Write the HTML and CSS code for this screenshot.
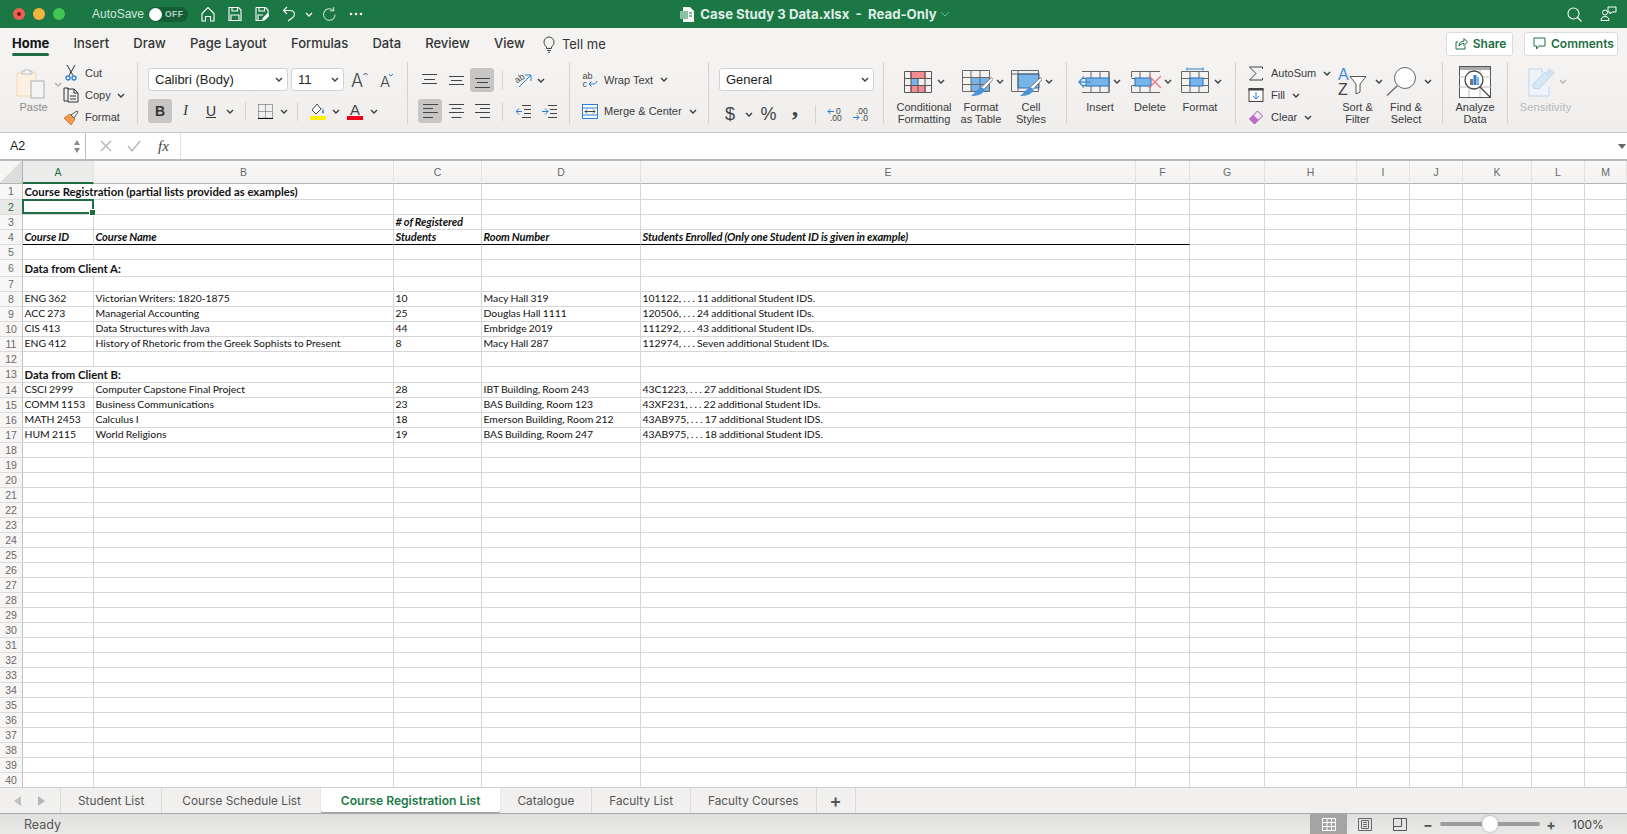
FILE: index.html
```html
<!DOCTYPE html>
<html lang="en">
<head>
<meta charset="utf-8">
<title>Case Study 3 Data.xlsx - Read-Only</title>
<link rel="stylesheet" href="styles.css">
</head>
<body>
<svg class="sprite" aria-hidden="true">
  <symbol id="chev" viewBox="0 0 8 5"><polyline points="1,1 4,4 7,1" fill="none" stroke="#3c3c3c" stroke-width="1.4"/></symbol>
  <symbol id="brush" viewBox="0 0 22 19"><path d="M20.500.5 9.500 11l2.500 2.500L22 2.500z" fill="#fff" stroke="#6f6f6f" stroke-width=".9"/><path d="M9 11c2-1 4 0 4.500 2.500C11 18 5 19 0 19c3-2 5-6 9-8z" fill="#4a93d6"/></symbol>
</svg>

<header class="titlebar">
  <div class="tb-left">
    <span class="light red"><i></i></span><span class="light yellow"></span><span class="light green"></span>
    <span class="autosave">AutoSave</span>
    <span class="toggle"><i></i><b>OFF</b></span>
    <div class="qat">
      <svg width="14" height="16" viewBox="0 0 14 16"><path d="M1 7.500 7 1.500l6 6V15H9.500v-4.500h-5V15H1z" fill="none" stroke="#fff" stroke-width="1.100"/></svg>
      <svg width="14" height="16" viewBox="0 0 14 16"><path d="M1 1.500h9.500L13 4v10.500H1zM4 1.500V5h5.500V1.500M3 14.500V9h8v5.500" fill="none" stroke="#fff" stroke-width="1.100"/></svg>
      <svg width="14" height="16" viewBox="0 0 14 16"><path d="M1 1.500h9.500L13 4v4M7 14.500H1v-13M4 1.500V5h5.500V1.500M3 14.500V9h5" fill="none" stroke="#fff" stroke-width="1.100"/><path d="M7 15l.6-3 5-5 2.300 2.300-5 5z" fill="#fff"/></svg>
      <svg width="14" height="16" viewBox="0 0 14 16"><path d="M5 1 1.500 4.500 5 8M1.500 4.500H8c5 0 6 5 1.500 8L6 15" fill="none" stroke="#fff" stroke-width="1.100"/></svg>
      <svg class="qat-chev" width="8" height="5"><polyline points="1,1 4,4 7,1" fill="none" stroke="#fff" stroke-width="1.300"/></svg>
      <svg width="14" height="16" viewBox="0 0 15 16"><path d="M12 4A6.200 6.200 0 1 0 14 8.500" fill="none" stroke="#cfe3d7" stroke-width="1.100"/><path d="M12.500.5v4h-4" fill="none" stroke="#cfe3d7" stroke-width="1.100"/></svg>
      <svg width="14" height="4" viewBox="0 0 14 4"><circle cx="2" cy="2" r="1.300" fill="#fff"/><circle cx="7" cy="2" r="1.300" fill="#fff"/><circle cx="12" cy="2" r="1.300" fill="#fff"/></svg>
    </div>
  </div>
  <div class="doc-title">
    <svg width="14" height="15" viewBox="0 0 14 15"><path d="M3 0h7l4 4v11H3z" fill="#f1f6f3"/><rect x="0" y="4" width="8" height="8" fill="#8fbfa3"/><path d="M9 6h3M9 9h3" stroke="#1c7846"/></svg>
    <span>Case Study 3 Data.xlsx&nbsp; - &nbsp;Read-Only</span>
    <svg width="10" height="6" viewBox="0 0 10 6"><polyline points="1,1 5,5 9,1" fill="none" stroke="#7fb197"/></svg>
  </div>
  <div class="tb-right">
    <svg width="15" height="15" viewBox="0 0 15 15"><circle cx="6.500" cy="6.500" r="5.500" fill="none" stroke="#fff" stroke-width="1.100"/><path d="M10.500 10.500 14.500 14.500" stroke="#fff" stroke-width="1.100"/></svg>
    <svg width="17" height="16" viewBox="0 0 17 16"><circle cx="5" cy="6.500" r="2.500" fill="none" stroke="#fff"/><path d="M1 14.500c0-2 1-4 4-4s4 2 4 4z" fill="none" stroke="#fff"/><path d="M8 1h8v5h-4l-2 2V6H8z" fill="none" stroke="#fff"/></svg>
  </div>
</header>

<nav class="tabrow">
  <span class="rtab active">Home</span>
  <span class="rtab">Insert</span>
  <span class="rtab">Draw</span>
  <span class="rtab">Page Layout</span>
  <span class="rtab">Formulas</span>
  <span class="rtab">Data</span>
  <span class="rtab">Review</span>
  <span class="rtab">View</span>
  <span class="tell">
    <svg width="12" height="17" viewBox="0 0 12 17"><path d="M3.500 11C2 9.500 1 8.300 1 6a5 5 0 0 1 10 0c0 2.300-1 3.500-2.500 5v1.500h-5zM4 14.500h4M5 16.300h2" fill="none" stroke="#444"/></svg>
    Tell me
  </span>
  <span class="action share">
    <svg width="13" height="13" viewBox="0 0 13 13"><path d="M3 5H1v7h9V9M4 9c0-3 2-5 5-5V1.500L12.500 5 9 8.500V6.500C7 6.500 5 7 4 9z" fill="none" stroke="#1d6f42"/></svg>
    Share
  </span>
  <span class="action comments">
    <svg width="13" height="13" viewBox="0 0 13 13"><path d="M1 1h11v8H6l-2.500 3V9H1z" fill="none" stroke="#1d6f42"/></svg>
    Comments
  </span>
</nav>

<section class="ribbon">
  <div class="grp g-clip">
    <div class="paste">
      <div class="paste-top">
        <svg width="29" height="30" viewBox="0 0 29 30"><rect x="1" y="4" width="19" height="23" fill="#fbf0e2" stroke="#f4d8b4"/><path d="M6 5V2h3a2 2 0 0 1 4 0h3v3z" fill="#f4f3f2" stroke="#bdbdbd"/><rect x="15" y="12" width="13" height="17" fill="#f4f4f4" stroke="#adadad"/></svg>
        <svg class="chev pale" width="8" height="5"><use href="#chev"/></svg>
      </div>
      <span class="muted">Paste</span>
    </div>
    <div class="stack">
      <div class="line"><svg width="12" height="16" viewBox="0 0 12 16"><path d="M2 0 8 10.500M10 0 4 10.500" stroke="#333" fill="none"/><circle cx="3" cy="13" r="2" fill="none" stroke="#2b7cd3" stroke-width="1.300"/><circle cx="9" cy="13" r="2" fill="none" stroke="#2b7cd3" stroke-width="1.300"/></svg><span>Cut</span></div>
      <div class="line"><svg width="16" height="16" viewBox="0 0 16 16"><path d="M5 1H1v13h4" fill="none" stroke="#333"/><path d="M5 1v14h10V6l-4-4H5zM11 2v4h4M7 9h6M7 12h6" fill="none" stroke="#333"/></svg><span>Copy</span><svg class="chev" width="8" height="5"><use href="#chev"/></svg></div>
      <div class="line"><svg width="16" height="15" viewBox="0 0 16 15"><path d="M1 8l6-4 5 5-4 6z" fill="#f19d4f" stroke="#e27a26"/><path d="M8 5l6-4 1 1-4 6z" fill="#fff" stroke="#555"/></svg><span>Format</span></div>
    </div>
  </div>

  <div class="grp g-font">
    <div class="row1 font-r1">
      <div class="select font-name"><span>Calibri (Body)</span><svg class="chev" width="8" height="5"><use href="#chev"/></svg></div>
      <div class="select font-size"><span>11</span><svg class="chev" width="8" height="5"><use href="#chev"/></svg></div>
      <svg class="ovf" width="16" height="15" viewBox="0 0 16 15"><text x="-1" y="14.500" class="glyph-a">A</text><polyline points="11.500,3 13.500,1 15.500,3" fill="none" stroke="#444"/></svg>
      <svg class="ovf" width="14" height="14" viewBox="0 0 14 14"><text x="0" y="14" class="glyph-a small">A</text><polyline points="9,1 11,3 13,1" fill="none" stroke="#2b7cd3"/></svg>
    </div>
    <div class="row2 font-r2">
      <div class="btn on bold">B</div>
      <div class="btn ital">I</div>
      <div class="btn under">U</div>
      <svg class="chev" width="8" height="5"><use href="#chev"/></svg>
      <i class="vr"></i>
      <svg width="15" height="15" viewBox="0 0 15 15"><path d="M.5.5h14M.5.5v14M14.500.5v14M7.500.5v14M.5 7.500h14" stroke="#555" stroke-dasharray="1 1" fill="none"/><path d="M0 14.500h15" stroke="#111" stroke-width="1.200"/></svg>
      <svg class="chev" width="8" height="5"><use href="#chev"/></svg>
      <i class="vr"></i>
      <svg width="16" height="17" viewBox="0 0 16 17"><path d="M7 1 2 7l4 4 5-5z" fill="#fff" stroke="#444"/><path d="M13 4l1 6h-2z" fill="#2b7cd3"/><rect y="13" width="16" height="4" fill="#fff200"/></svg>
      <svg class="chev" width="8" height="5"><use href="#chev"/></svg>
      <svg class="ovf" width="16" height="17" viewBox="0 0 16 17"><text x="3" y="11.500" class="glyph-a mid">A</text><rect y="13" width="16" height="4" fill="#f0001c"/></svg>
      <svg class="chev" width="8" height="5"><use href="#chev"/></svg>
    </div>
  </div>

  <div class="grp g-align">
    <div class="row1 align-r1">
      <svg width="15" height="15" viewBox="0 0 15 15"><path d="M0 1.500h15M2 6.500h11M0 10.500h15" stroke="#444"/></svg>
      <svg width="15" height="15" viewBox="0 0 15 15"><path d="M0 3.500h15M2 7.500h11M0 11.500h15" stroke="#444"/></svg>
      <div class="btn on wide"><svg width="15" height="15" viewBox="0 0 15 15"><path d="M0 5.500h15M2 9.500h11M0 14.500h15" stroke="#444"/></svg></div>
      <i class="vr"></i>
      <svg class="ovf" width="17" height="16" viewBox="0 0 17 16"><text x="0" y="9" class="glyph-ab" transform="rotate(-35 5 7)">ab</text><path d="M4 15 15 4M10 3h6v6" fill="none" stroke="#2b7cd3"/></svg>
      <svg class="chev" width="8" height="5"><use href="#chev"/></svg>
    </div>
    <div class="row2 align-r2">
      <div class="btn on wide"><svg width="15" height="14" viewBox="0 0 15 14"><path d="M0 .5h15M0 4.500h10M0 8.500h15M0 13.500h10" stroke="#444"/></svg></div>
      <svg width="15" height="14" viewBox="0 0 15 14"><path d="M0 .5h15M2.500 4.500h10M0 8.500h15M2.500 13.500h10" stroke="#444"/></svg>
      <svg width="15" height="14" viewBox="0 0 15 14"><path d="M0 .5h15M5 4.500h10M0 8.500h15M5 13.500h10" stroke="#444"/></svg>
      <i class="vr"></i>
      <svg width="15" height="13" viewBox="0 0 15 13"><path d="M6 .5h9M8 4.500h7M8 8.500h7M6 12.500h9" stroke="#444"/><path d="M0 6.500h6M3 3.500l-3 3 3 3" fill="none" stroke="#2b7cd3"/></svg>
      <svg width="15" height="13" viewBox="0 0 15 13"><path d="M6 .5h9M8 4.500h7M8 8.500h7M6 12.500h9" stroke="#444"/><path d="M0 6.500h6M3 3.500l3 3-3 3" fill="none" stroke="#2b7cd3"/></svg>
    </div>
  </div>

  <div class="grp g-wrap">
    <div class="line wrapline"><svg class="ovf" width="15" height="16" viewBox="0 0 15 16"><text x="0" y="7" class="glyph-ab">ab</text><text x="0" y="15" class="glyph-ab">c</text><path d="M14 9c0 3-2 3-7 3M9 9.500 6.500 12 9 14.500" fill="none" stroke="#2b7cd3"/></svg><span>Wrap Text</span><svg class="chev" width="8" height="5"><use href="#chev"/></svg></div>
    <div class="line mergeline"><svg width="16" height="15" viewBox="0 0 16 15"><rect x=".5" y=".5" width="15" height="14" fill="#fff" stroke="#2b7cd3"/><path d="M0 4h16M0 11h16" stroke="#2b7cd3"/><path d="M3 7.500h10M5 5.500l-2 2 2 2M11 5.500l2 2-2 2" fill="none" stroke="#444"/></svg><span>Merge &amp; Center</span><svg class="chev" width="8" height="5"><use href="#chev"/></svg></div>
  </div>

  <div class="grp g-num">
    <div class="select num-format"><span>General</span><svg class="chev" width="8" height="5"><use href="#chev"/></svg></div>
    <div class="row2 num-r2">
      <span class="sym">$</span>
      <svg class="chev" width="8" height="5"><use href="#chev"/></svg>
      <span class="sym pct">%</span>
      <span class="sym comma">,</span>
      <i class="vr"></i>
      <svg class="ovf" width="17" height="13" viewBox="0 0 17 13"><path d="M7 3.500H1M3.500 1 1 3.500 3.500 6" fill="none" stroke="#2b7cd3"/><text x="9" y="6" class="glyph-dec">0</text><text x="3" y="13" class="glyph-dec">.00</text></svg>
      <svg class="ovf" width="17" height="13" viewBox="0 0 17 13"><text x="3" y="6" class="glyph-dec">.00</text><path d="M0 9.500h6M3.500 7 6 9.500 3.500 12" fill="none" stroke="#2b7cd3"/><text x="8" y="13" class="glyph-dec">.0</text></svg>
    </div>
  </div>

  <div class="grp g-styles">
    <div class="big b-cf">
      <div class="big-ico">
        <svg width="28" height="22" viewBox="0 0 28 22"><path d="M7 .5h14v7H7zM7 14.500h14v7H7z" fill="#f38d94" stroke="#e0393e"/><rect x="7" y="7.500" width="7" height="7" fill="#78b4e8"/><path d="M.5.500h27v21H.5zM.5 7.500h27M.5 14.500h27M7 .5v21M14 7.500v14M21 .5v21" fill="none" stroke="#555"/></svg>
        <svg class="chev" width="8" height="5"><use href="#chev"/></svg>
      </div>
      <span>Conditional</span><span>Formatting</span>
    </div>
    <div class="big b-fat">
      <div class="big-ico">
        <svg class="brushed" width="31" height="26" viewBox="0 0 31 26"><rect x="9" y="7.500" width="19" height="14" fill="#78b4e8"/><path d="M.5.500h27v21H.5zM.5 7.500h27M.5 14.500h27M9 .5v21M18 .5v21" fill="none" stroke="#666"/><use href="#brush" x="9" y="7" width="22" height="19"/></svg>
        <svg class="chev" width="8" height="5"><use href="#chev"/></svg>
      </div>
      <span>Format</span><span>as Table</span>
    </div>
    <div class="big b-cell">
      <div class="big-ico">
        <svg class="brushed" width="31" height="26" viewBox="0 0 31 26"><rect x="7" y="4" width="21" height="14" fill="#78b4e8" stroke="#1e6fc0"/><path d="M.5.500h27v21H.5zM.5 4h27M7 .5v21M18 18v3.500" fill="none" stroke="#666"/><use href="#brush" x="9" y="7" width="22" height="19"/></svg>
        <svg class="chev" width="8" height="5"><use href="#chev"/></svg>
      </div>
      <span>Cell</span><span>Styles</span>
    </div>
  </div>

  <div class="grp g-cells">
    <div class="big b-ins">
      <div class="big-ico">
        <svg width="32" height="22" viewBox="0 0 32 22"><path d="M4 .5h27v21H4M4 7.500h27M4 14.500h27M13 .5v21M22 .5v21M31 .5v21" fill="none" stroke="#666"/><rect x="8" y="7" width="23" height="8" fill="#78b4e8" stroke="#1e6fc0"/><path d="M1 11h12M6 5.500 1 11l5 5.500" fill="none" stroke="#4a93d6" stroke-width="1.600"/></svg>
        <svg class="chev" width="8" height="5"><use href="#chev"/></svg>
      </div>
      <span>Insert</span>
    </div>
    <div class="big b-del">
      <div class="big-ico">
        <svg width="30" height="22" viewBox="0 0 30 22"><path d="M29 .5H.5v6M.5 15v6.500H29M.5 7.500h20M.5 14.500h20M9 .5v21M19 .5v7M19 14.500v7" fill="none" stroke="#666"/><rect x="4" y="7" width="16" height="8" fill="#78b4e8" stroke="#1e6fc0"/><path d="M18 5l12 12M30 5 18 17" stroke="#f0757b" stroke-width="1.300"/></svg>
        <svg class="chev" width="8" height="5"><use href="#chev"/></svg>
      </div>
      <span>Delete</span>
    </div>
    <div class="big b-fmt">
      <div class="big-ico">
        <svg class="up2" width="28" height="26" viewBox="0 0 28 26"><path d="M6 2h16M6 .5v3M22 .5v3" stroke="#2b7cd3" fill="none"/><path d="M.5 4.500h27v21H.5zM.5 11.500h27M.5 18.500h27M9 4.500v21M18 4.500v21" fill="none" stroke="#666"/><rect x="9" y="11" width="13" height="8" fill="#78b4e8" stroke="#1e6fc0"/></svg>
        <svg class="chev" width="8" height="5"><use href="#chev"/></svg>
      </div>
      <span>Format</span>
    </div>
  </div>

  <div class="grp g-edit">
    <div class="stack">
      <div class="line"><svg width="15" height="15" viewBox="0 0 15 15"><path d="M14 3V1H1l6.500 6.500L1 14h13v-2" fill="none" stroke="#444"/></svg><span>AutoSum</span><svg class="chev" width="8" height="5"><use href="#chev"/></svg></div>
      <div class="line"><svg width="15" height="14" viewBox="0 0 15 14"><rect x=".5" y=".5" width="14" height="13" fill="#fff" stroke="#444"/><path d="M0 1.500h15" stroke="#444" stroke-width="2"/><path d="M7.500 4v7M4.500 8l3 3 3-3" fill="none" stroke="#2b7cd3"/></svg><span>Fill</span><svg class="chev" width="8" height="5"><use href="#chev"/></svg></div>
      <div class="line"><svg width="15" height="15" viewBox="0 0 15 15"><path d="M9 1l5 5-8 8-5-5z" fill="#f3e9f5" stroke="#a64db5"/><path d="M1 9l4-4 5 5-4 4z" fill="#b96bc7"/></svg><span>Clear</span><svg class="chev" width="8" height="5"><use href="#chev"/></svg></div>
    </div>
    <div class="big b-sort">
      <div class="big-ico">
        <svg class="ovf" width="29" height="28" viewBox="0 0 29 28"><text x="0" y="12" class="glyph-sort blue">A</text><text x="0" y="27" class="glyph-sort">Z</text><path d="M12 8.500h16L22 16v8l-4 2V16z" fill="#fff" stroke="#555"/></svg>
        <svg class="chev" width="8" height="5"><use href="#chev"/></svg>
      </div>
      <span>Sort &amp;</span><span>Filter</span>
    </div>
    <div class="big b-find">
      <div class="big-ico">
        <svg width="30" height="29" viewBox="0 0 30 29"><circle cx="19" cy="11" r="10.500" fill="#fff" stroke="#666"/><path d="M11.500 18.500 1 28.500" stroke="#666" stroke-width="1.200"/></svg>
        <svg class="chev" width="8" height="5"><use href="#chev"/></svg>
      </div>
      <span>Find &amp;</span><span>Select</span>
    </div>
  </div>

  <div class="grp g-analyze">
    <div class="big b-an">
      <div class="big-ico">
        <svg width="32" height="32" viewBox="0 0 32 32"><rect x=".5" y=".5" width="31" height="31" fill="#fff" stroke="#555"/><rect x="1" y="1" width="30" height="3" fill="#aaa"/><path d="M0 11h32M0 21h32M10 4v27M21 4v27" stroke="#bbb"/><circle cx="15" cy="14" r="9" fill="#fff" stroke="#444" stroke-width="1.300"/><path d="M21 21l10 10" stroke="#444" stroke-width="1.300"/><rect x="11" y="13" width="3" height="6" fill="#777"/><rect x="14.500" y="9" width="3" height="10" fill="#2b7cd3"/><rect x="18" y="11" width="2" height="8" fill="#78b4e8"/></svg>
      </div>
      <span>Analyze</span><span>Data</span>
    </div>
  </div>

  <div class="grp g-sens">
    <div class="big b-sens">
      <div class="big-ico">
        <svg width="27" height="30" viewBox="0 0 27 30"><path d="M1 2h13v4M1 2v27h20V20" fill="#eef4fa" stroke="#bcd7ee"/><path d="M5 17 17 5l5 5-11 12-6-1z" fill="#d6e6f4" stroke="#bcd7ee"/><path d="M18 5l4-4 5 5-4 4z" fill="#cfe1f1"/></svg>
        <svg class="chev pale" width="8" height="5"><use href="#chev"/></svg>
      </div>
      <span class="muted2">Sensitivity</span>
    </div>
  </div>
</section>

<section class="formulabar">
  <div class="namebox"><span>A2</span><span class="spin"><i class="up"></i><i class="down"></i></span></div>
  <div class="fx-tools">
    <svg width="12" height="12" viewBox="0 0 12 12"><path d="M1 1l10 10M11 1 1 11" stroke="#b9b9b9" stroke-width="1.500"/></svg>
    <svg width="14" height="12" viewBox="0 0 14 12"><path d="M1 6l4 5 8-10" fill="none" stroke="#b9b9b9" stroke-width="1.500"/></svg>
    <span class="fx">fx</span>
  </div>
  <div class="fx-input"></div>
  <i class="fx-arrow"></i>
</section>

<main class="grid-wrap">
<table class="sheet">
  <colgroup>
    <col class="c-h"><col class="c-a"><col class="c-b"><col class="c-c"><col class="c-d"><col class="c-e"><col class="c-f"><col class="c-g"><col class="c-i1"><col class="c-n"><col class="c-n"><col class="c-k"><col class="c-n"><col>
  </colgroup>
  <thead>
    <tr><th class="corner"></th><th class="cur">A</th><th>B</th><th>C</th><th>D</th><th>E</th><th>F</th><th>G</th><th>H</th><th>I</th><th>J</th><th>K</th><th>L</th><th>M</th></tr>
  </thead>
  <tbody>
    <tr class="h16"><th>1</th><td colspan="2" class="b">Course Registration (partial lists provided as examples)</td><td></td><td></td><td></td><td></td><td></td><td></td><td></td><td></td><td></td><td></td><td></td></tr>
    <tr><th class="cur">2</th><td class="sel"><div class="selbox"><i></i></div></td><td></td><td></td><td></td><td></td><td></td><td></td><td></td><td></td><td></td><td></td><td></td><td></td></tr>
    <tr><th>3</th><td></td><td></td><td class="bi">#&nbsp;of Registered</td><td></td><td></td><td></td><td></td><td></td><td></td><td></td><td></td><td></td><td></td></tr>
    <tr class="rule"><th>4</th><td class="bi">Course ID</td><td class="bi">Course Name</td><td class="bi">Students</td><td class="bi">Room Number</td><td class="bi">Students Enrolled (Only one Student ID is given in example)</td><td></td><td></td><td></td><td></td><td></td><td></td><td></td><td></td></tr>
    <tr><th>5</th><td></td><td></td><td></td><td></td><td></td><td></td><td></td><td></td><td></td><td></td><td></td><td></td><td></td></tr>
    <tr class="h17"><th>6</th><td colspan="2" class="b">Data from Client A:</td><td></td><td></td><td></td><td></td><td></td><td></td><td></td><td></td><td></td><td></td><td></td></tr>
    <tr><th>7</th><td></td><td></td><td></td><td></td><td></td><td></td><td></td><td></td><td></td><td></td><td></td><td></td><td></td></tr>
    <tr><th>8</th><td>ENG 362</td><td>Victorian Writers: 1820-1875</td><td>10</td><td>Macy Hall 319</td><td>101122, . . . 11 additional Student IDS.</td><td></td><td></td><td></td><td></td><td></td><td></td><td></td><td></td></tr>
    <tr><th>9</th><td>ACC 273</td><td>Managerial Accounting</td><td>25</td><td>Douglas Hall 1111</td><td>120506, . . . 24 additional Student IDs.</td><td></td><td></td><td></td><td></td><td></td><td></td><td></td><td></td></tr>
    <tr><th>10</th><td>CIS 413</td><td>Data Structures with Java</td><td>44</td><td>Embridge 2019</td><td>111292, . . . 43 additional Student IDs.</td><td></td><td></td><td></td><td></td><td></td><td></td><td></td><td></td></tr>
    <tr><th>11</th><td>ENG 412</td><td>History of Rhetoric from the Greek Sophists to Present</td><td>8</td><td>Macy Hall 287</td><td>112974, . . . Seven additional Student IDs.</td><td></td><td></td><td></td><td></td><td></td><td></td><td></td><td></td></tr>
    <tr><th>12</th><td></td><td></td><td></td><td></td><td></td><td></td><td></td><td></td><td></td><td></td><td></td><td></td><td></td></tr>
    <tr class="h16"><th>13</th><td colspan="2" class="b">Data from Client B:</td><td></td><td></td><td></td><td></td><td></td><td></td><td></td><td></td><td></td><td></td><td></td></tr>
    <tr><th>14</th><td>CSCI 2999</td><td>Computer Capstone Final Project</td><td>28</td><td>IBT Building, Room 243</td><td>43C1223, . . . 27 additional Student IDS.</td><td></td><td></td><td></td><td></td><td></td><td></td><td></td><td></td></tr>
    <tr><th>15</th><td>COMM 1153</td><td>Business Communications</td><td>23</td><td>BAS Building, Room 123</td><td>43XF231, . . . 22 additional Student IDs.</td><td></td><td></td><td></td><td></td><td></td><td></td><td></td><td></td></tr>
    <tr><th>16</th><td>MATH 2453</td><td>Calculus I</td><td>18</td><td>Emerson Building, Room 212</td><td>43AB975, . . . 17 additional Student IDS.</td><td></td><td></td><td></td><td></td><td></td><td></td><td></td><td></td></tr>
    <tr><th>17</th><td>HUM 2115</td><td>World Religions</td><td>19</td><td>BAS Building, Room 247</td><td>43AB975, . . . 18 additional Student IDS.</td><td></td><td></td><td></td><td></td><td></td><td></td><td></td><td></td></tr>
    <tr><th>18</th><td></td><td></td><td></td><td></td><td></td><td></td><td></td><td></td><td></td><td></td><td></td><td></td><td></td></tr>
    <tr><th>19</th><td></td><td></td><td></td><td></td><td></td><td></td><td></td><td></td><td></td><td></td><td></td><td></td><td></td></tr>
    <tr><th>20</th><td></td><td></td><td></td><td></td><td></td><td></td><td></td><td></td><td></td><td></td><td></td><td></td><td></td></tr>
    <tr><th>21</th><td></td><td></td><td></td><td></td><td></td><td></td><td></td><td></td><td></td><td></td><td></td><td></td><td></td></tr>
    <tr><th>22</th><td></td><td></td><td></td><td></td><td></td><td></td><td></td><td></td><td></td><td></td><td></td><td></td><td></td></tr>
    <tr><th>23</th><td></td><td></td><td></td><td></td><td></td><td></td><td></td><td></td><td></td><td></td><td></td><td></td><td></td></tr>
    <tr><th>24</th><td></td><td></td><td></td><td></td><td></td><td></td><td></td><td></td><td></td><td></td><td></td><td></td><td></td></tr>
    <tr><th>25</th><td></td><td></td><td></td><td></td><td></td><td></td><td></td><td></td><td></td><td></td><td></td><td></td><td></td></tr>
    <tr><th>26</th><td></td><td></td><td></td><td></td><td></td><td></td><td></td><td></td><td></td><td></td><td></td><td></td><td></td></tr>
    <tr><th>27</th><td></td><td></td><td></td><td></td><td></td><td></td><td></td><td></td><td></td><td></td><td></td><td></td><td></td></tr>
    <tr><th>28</th><td></td><td></td><td></td><td></td><td></td><td></td><td></td><td></td><td></td><td></td><td></td><td></td><td></td></tr>
    <tr><th>29</th><td></td><td></td><td></td><td></td><td></td><td></td><td></td><td></td><td></td><td></td><td></td><td></td><td></td></tr>
    <tr><th>30</th><td></td><td></td><td></td><td></td><td></td><td></td><td></td><td></td><td></td><td></td><td></td><td></td><td></td></tr>
    <tr><th>31</th><td></td><td></td><td></td><td></td><td></td><td></td><td></td><td></td><td></td><td></td><td></td><td></td><td></td></tr>
    <tr><th>32</th><td></td><td></td><td></td><td></td><td></td><td></td><td></td><td></td><td></td><td></td><td></td><td></td><td></td></tr>
    <tr><th>33</th><td></td><td></td><td></td><td></td><td></td><td></td><td></td><td></td><td></td><td></td><td></td><td></td><td></td></tr>
    <tr><th>34</th><td></td><td></td><td></td><td></td><td></td><td></td><td></td><td></td><td></td><td></td><td></td><td></td><td></td></tr>
    <tr><th>35</th><td></td><td></td><td></td><td></td><td></td><td></td><td></td><td></td><td></td><td></td><td></td><td></td><td></td></tr>
    <tr><th>36</th><td></td><td></td><td></td><td></td><td></td><td></td><td></td><td></td><td></td><td></td><td></td><td></td><td></td></tr>
    <tr><th>37</th><td></td><td></td><td></td><td></td><td></td><td></td><td></td><td></td><td></td><td></td><td></td><td></td><td></td></tr>
    <tr><th>38</th><td></td><td></td><td></td><td></td><td></td><td></td><td></td><td></td><td></td><td></td><td></td><td></td><td></td></tr>
    <tr><th>39</th><td></td><td></td><td></td><td></td><td></td><td></td><td></td><td></td><td></td><td></td><td></td><td></td><td></td></tr>
    <tr><th>40</th><td></td><td></td><td></td><td></td><td></td><td></td><td></td><td></td><td></td><td></td><td></td><td></td><td></td></tr>
  </tbody>
</table>
</main>

<nav class="sheetbar">
  <div class="sheet-nav"><i class="tri left"></i><i class="tri right"></i></div>
  <span class="stab">Student List</span>
  <span class="stab roomy">Course Schedule List</span>
  <span class="stab active roomy">Course Registration List</span>
  <span class="stab">Catalogue</span>
  <span class="stab">Faculty List</span>
  <span class="stab">Faculty Courses</span>
  <span class="stab plus">+</span>
</nav>

<footer class="statusbar">
  <span class="ready">Ready</span>
  <div class="views">
    <div class="view on"><svg width="14" height="13" viewBox="0 0 14 13"><path d="M.5.5h13v12H.5zM.5 4.500h13M.5 8.500h13M5 .5v12M9.500.5v12" fill="none" stroke="#fff"/></svg></div>
    <div class="view"><svg width="14" height="13" viewBox="0 0 14 13"><path d="M.5.5h13v12H.5z" fill="none" stroke="#666"/><path d="M3.500 2.500h7v8h-7zM5 4.500h4M5 6.500h4M5 8.500h4" fill="none" stroke="#666"/></svg></div>
    <div class="view"><svg width="14" height="13" viewBox="0 0 14 13"><path d="M.5.5h13v12H.5zM.5 8.500h8V.5" fill="none" stroke="#555"/></svg></div>
  </div>
  <div class="zoom">
    <b class="zbtn">&minus;</b>
    <div class="slider"><i></i></div>
    <b class="zbtn">+</b>
    <span class="zval">100%</span>
  </div>
</footer>
</body>
</html>
```

FILE: styles.css
```css
* { box-sizing: border-box; }
html, body { margin: 0; height: 100%; }
body {
  width: 1627px; height: 834px; overflow: hidden;
  display: flex; flex-direction: column;
  font-family: "Liberation Sans", Arial, sans-serif;
  font-size: 11px; color: #333; background: #f4f3f2;
}
svg { display: block; flex: none; }
svg.ovf { overflow: visible; }
.sprite { width: 0; height: 0; position: absolute; }

/* Title bar */
.titlebar {
  height: 28px; flex: none; background: #1b7845;
  display: grid; grid-template-columns: 1fr auto 1fr; align-items: center;
}
.tb-left { display: flex; align-items: center; padding-left: 13px; }
.light { width: 12px; height: 12px; border-radius: 50%; margin-right: 8px; display: flex; align-items: center; justify-content: center; }
.light.red { background: #ef5f58; }
.light.red i { width: 4px; height: 4px; border-radius: 50%; background: #7d1410; }
.light.yellow { background: #f5b53d; }
.light.green { background: #41c553; }
.autosave { margin-left: 19px; font-size: 12px; font-weight: 400; color: #d3e6db; width: 56px; white-space: nowrap; }
.toggle { width: 40px; height: 15px; border-radius: 8px; background: #145d37; display: flex; align-items: center; padding-left: 1px; }
.toggle i { width: 13px; height: 13px; border-radius: 50%; background: #fff; flex: none; }
.toggle b { margin-left: 3px; font-size: 8.500px; font-weight: 700; color: #b8d2c4; letter-spacing: .5px; }
.qat { display: flex; align-items: center; gap: 13px; margin-left: 13px; }
.qat-chev { margin: 0 -4px; }
.doc-title { display: flex; align-items: center; gap: 6px; padding-left: 3px; color: #dfeee6; font: 700 13.200px Inter, sans-serif; }
.doc-title span { margin-right: -3px; }
.tb-right { display: flex; align-items: center; justify-content: flex-end; gap: 18px; padding-right: 10px; }

/* Ribbon tabs */
.tabrow { height: 34px; flex: none; display: flex; align-items: center; gap: 24.200px; padding: 0 9px 0 12px; font: 500 13px Inter, sans-serif; color: #333; }
.rtab { height: 100%; display: flex; align-items: center; padding-bottom: 4px; position: relative; }
.rtab.active { color: #111; font-weight: 700; }
.rtab.active::after { content: ""; position: absolute; left: 0; right: 0; top: 25px; height: 3px; background: #1f6e43; border-radius: 2px; }
.tell { display: flex; align-items: center; gap: 7px; margin-left: -6px; padding-bottom: 2px; font-weight: 400; }
.action { height: 24px; margin-top: -3px; background: #fff; border: 1px solid #dcdcdc; border-radius: 3px; display: flex; align-items: center; gap: 5px; padding: 0 6px 0 8px; color: #1d6f42; font-weight: 600; font-size: 12px; }
.share { margin-left: auto; margin-right: -13px; width: 67px; }
.comments { width: 94px; }

/* Ribbon body */
.ribbon { height: 71px; flex: none; display: flex; align-items: flex-start; border-bottom: 1px solid #c9c9c9; background: linear-gradient(#f4f3f2, #efeeed); color: #3a3a3a; }
.grp { height: 62px; flex: none; border-right: 1px solid #d4d3d2; }
.g-clip { width: 138px; display: flex; padding-left: 13px; }
.g-font { width: 270px; padding-left: 10px; }
.g-align { width: 162px; }
.g-wrap { width: 139px; padding-left: 12px; }
.g-num { width: 175px; padding-left: 10px; }
.g-styles { width: 183px; display: flex; }
.g-cells { width: 169px; display: flex; }
.g-edit { width: 207px; display: flex; }
.g-analyze { width: 65px; display: flex; justify-content: center; }
.g-sens { flex: 1; border-right: 0; display: flex; }

.chev { width: 8px; height: 5px; }
.chev.pale { opacity: .35; }
.vr { display: block; width: 1px; height: 19px; background: #d4d3d2; }
.muted { color: #8d8d8d; }
.muted2 { color: #b6b6b6; letter-spacing: .2px; white-space: nowrap; }

.paste { width: 43px; display: flex; flex-direction: column; padding-top: 6px; }
.paste-top { display: flex; align-items: center; gap: 3px; height: 32px; margin-left: 3px; }
.paste .muted { text-align: center; margin-top: 1px; padding-right: 2px; }
.stack { display: flex; flex-direction: column; padding-top: 0; }
.line { height: 22px; flex: none; display: flex; align-items: center; white-space: nowrap; }
.g-clip .stack { margin-left: 7px; }
.g-clip .line > svg:first-child { width: 16px; margin-right: 6px; }
.g-clip .chev { margin-left: 6px; }

.row1, .row2 { display: grid; align-items: center; justify-items: center; }
.row1 { height: 23px; margin-top: 6px; }
.row2 { height: 24px; margin-top: 8px; }
.font-r1 { grid-template-columns: 143px 61px 28px 27px; justify-items: start; }
.font-r2 { grid-template-columns: 24px 27px 24px 14px 16px 24px 13px 15px 25px 12px 26px 12px; }
.select { height: 23px; background: #fff; border: 1px solid #d3d3d3; border-radius: 3px; display: flex; align-items: center; justify-content: space-between; padding: 0 4px 0 6px; font: 13px "Liberation Sans", Arial, sans-serif; color: #222; }
.font-name { width: 140px; }
.font-size { width: 53px; }
.btn { height: 24px; width: 24px; border-radius: 3px; display: flex; align-items: center; justify-content: center; font-size: 14px; color: #333; }
.btn.on { background: #c8c6c4; }
.bold { font-weight: 700; }
.ital { font: italic 14px "Liberation Serif", serif; }
.under { text-decoration: underline; }
.glyph-a { font: 300 18px Inter, sans-serif; fill: #444; }
.glyph-a.small { font-size: 15px; }
.glyph-a.mid { font: 15px "Liberation Sans", sans-serif; }
.glyph-ab { font: 9px "Liberation Sans", sans-serif; fill: #444; }
.glyph-dec { font: 8.500px "Liberation Sans", sans-serif; fill: #444; }
.glyph-sort { font: 16px "Liberation Sans", sans-serif; fill: #444; }
.glyph-sort.blue { fill: #3f8fd8; }

.align-r1 { grid-template-columns: 27px 26px 26px 15px 26px 10px; margin-left: 8px; }
.align-r2 { grid-template-columns: 24px 28px 24px 17px 24px 28px; margin-left: 10px; }
.g-wrap .wrapline { margin-top: 6px; height: 23px; }
.g-wrap .mergeline { margin-top: 8px; height: 24px; }
.g-wrap .line > svg:first-child { width: 16px; margin-right: 6px; }
.g-wrap .chev { margin-left: 7px; }
.num-format { width: 155px; margin-top: 6px; }
.num-r2 { grid-template-columns: 28px 10px 29px 24px 16px 25px 27px; margin-left: -3px; }
.sym { font: 18px "Liberation Sans", sans-serif; color: #444; }
.sym.comma { font: 700 26px "Liberation Serif", serif; transform: translateY(-6px); }

.big { display: flex; flex-direction: column; align-items: center; line-height: 12px; color: #3a3a3a; white-space: nowrap; }
.big-ico { height: 39px; flex: none; display: flex; align-items: center; gap: 3px; align-self: flex-start; }
.big > span { flex: none; }
.brushed { margin-top: 3px; }
.up2 { margin-top: -3px; }
.b-cf { width: 70px; margin-left: 5px; }
.b-cf .big-ico { margin-left: 15px; gap: 5px; }
.b-fat { width: 44px; }
.b-fat .big-ico { margin-left: 3px; }
.b-cell { width: 56px; }
.b-cell .big-ico { margin-left: 8px; }
.b-ins { width: 50px; margin-left: 8px; }
.b-ins .big-ico { margin-left: 3px; }
.b-del { width: 50px; }
.b-del .big-ico { margin-left: 6px; }
.b-fmt { width: 50px; }
.b-fmt .big-ico { margin-left: 6px; gap: 5px; }
.g-edit .stack { width: 86px; margin-left: 12px; flex: none; }
.g-edit .line > svg:first-child { width: 16px; margin-right: 7px; }
.g-edit .chev { margin-left: 7px; }
.b-sort { width: 47px; }
.b-sort .big-ico { margin-left: 4px; gap: 1px; }
.b-find { width: 50px; }
.b-find .big-ico { margin-left: 5px; gap: 1px; }
.b-an { width: 50px; }
.b-an .big-ico { margin-left: 9px; }
.b-sens { margin-left: 10px; width: 55px; }
.b-sens .big-ico { margin-left: 10px; gap: 4px; }

/* Formula bar */
.formulabar { height: 27px; flex: none; background: #fff; display: flex; align-items: center; border-bottom: 1px solid #b9b9b9; }
.namebox { width: 86px; height: 100%; border-right: 1px solid #bdbdbd; display: flex; align-items: center; justify-content: space-between; padding: 0 5px 0 10px; font-size: 12.500px; color: #222; background: #fff; }
.spin { display: flex; flex-direction: column; gap: 3px; }
.spin i { display: block; width: 0; height: 0; border-left: 3.500px solid transparent; border-right: 3.500px solid transparent; }
.spin .up { border-bottom: 5px solid #888; }
.spin .down { border-top: 5px solid #888; }
.fx-tools { width: 95px; height: 100%; display: flex; align-items: center; gap: 15px; padding-left: 14px; border-right: 1px solid #e2e2e2; }
.fx { font: italic 15px "Liberation Serif", serif; color: #444; margin-left: 2px; }
.fx-input { flex: 1; height: 100%; }
.fx-arrow { display: block; width: 0; height: 0; margin-right: 1px; border-left: 4px solid transparent; border-right: 4px solid transparent; border-top: 5px solid #666; }

/* Sheet */
.grid-wrap { flex: none; height: 627px; overflow: hidden; background: #fff; border-top: 1px solid #b9b9b9; }
.sheet { table-layout: fixed; width: 1627px; border-collapse: separate; border-spacing: 0; font: 10.400px Lato, "Liberation Sans", sans-serif; word-spacing: -.5px; color: #111; }
.c-h { width: 23px; } .c-a { width: 71px; } .c-b { width: 300px; } .c-c { width: 88px; }
.c-d { width: 159px; } .c-e { width: 495px; } .c-f { width: 54px; } .c-g { width: 75px; }
.c-i1 { width: 92px; } .c-n { width: 53px; } .c-k { width: 69px; }
.sheet tr { height: 15px; }
.sheet thead tr { height: 23px; }
.sheet tr.h16 { height: 16px; }
.sheet tr.h17 { height: 17px; }
.sheet td, .sheet th { padding: 0; border-right: 1px solid #d6d6d6; border-bottom: 1px solid #d6d6d6; overflow: hidden; white-space: nowrap; font-weight: 400; }
.sheet td { padding: 0 0 1px 1.500px; vertical-align: bottom; line-height: 13px; }
.sheet th { font: 10.500px "Liberation Sans", sans-serif; color: #6a6a6a; text-align: center; background: #f7f6f5; word-spacing: 0; }
.sheet tbody th { border-right: 1px solid #c2c2c2; border-bottom-color: #dcdcdc; line-height: 13px; }
.sheet thead th { background: linear-gradient(#f9f8f7, #f3f2f1); border-right-color: #e4e3e2; border-bottom: 1px solid #b3b3b3; font-size: 10.500px; }
.sheet thead th.cur { background: #ebebea; color: #1f6e43; border-bottom: 2px solid #1f6e43; }
.sheet tbody th.cur { background: #e9e9e8; color: #1f6e43; }
.sheet .corner { background: linear-gradient(135deg, #f7f6f5 50%, #dcdcdb 50%); border-right: 1px solid #b3b3b3; }
.sheet td.b { font-weight: 700; font-size: 11.300px; word-spacing: 0; }
.sheet td.bi { font-weight: 700; font-style: italic; font-size: 11.100px; letter-spacing: -.1px; word-spacing: -.3px; }
.rule td:nth-of-type(-n+6) { border-bottom: 1px solid #000; }
.sheet td.sel { position: relative; overflow: visible; }
.selbox { position: absolute; left: -1px; top: -1px; right: -1px; bottom: 0; border: 2px solid #1f6e43; }
.selbox i { position: absolute; right: -3px; bottom: -3px; width: 5px; height: 5px; background: #1f6e43; outline: 1px solid #fff; }

/* Sheet tabs */
.sheetbar { height: 27px; flex: none; display: flex; background: #f1f0ef; border-top: 1px solid #cfcfcf; border-bottom: 1px solid #a9a9a9; font: 11.800px Inter, sans-serif; color: #555; }
.sheet-nav { width: 61px; display: flex; align-items: center; gap: 17px; padding-left: 14px; border-right: 1px solid #dadada; }
.tri { display: block; width: 0; height: 0; border-top: 5.500px solid transparent; border-bottom: 5.500px solid transparent; }
.tri.left { border-right: 7px solid #c2c2c2; }
.tri.right { border-left: 7px solid #b5b5b5; }
.stab { display: flex; align-items: center; padding: 0 17px 0 17px; border-right: 1px solid #dadada; }
.stab.roomy { padding: 0 20px; }
.stab.active { background: #fff; color: #1d7a46; font-weight: 600; font-size: 12.100px; height: 24px; border: 0; margin-left: -1px; box-shadow: 0 1px 1px #999; border-radius: 0 0 2px 2px; }
.stab.plus { font-size: 18px; font-weight: 600; padding: 0 13px; color: #555; }

/* Status bar */
.statusbar { height: 20px; flex: none; display: flex; align-items: center; background: linear-gradient(#dfdfde, #e9e9e8); font: 12.500px Inter, sans-serif; color: #555; padding-left: 24px; }
.views { display: flex; height: 100%; margin-left: auto; }
.view { width: 35px; display: flex; align-items: center; justify-content: center; }
.view.on { background: #a6a4a2; width: 37px; }
.zoom { display: flex; align-items: center; margin-left: 3px; width: 207px; }
.zbtn { width: 16px; text-align: center; font-size: 14px; color: #555; }
.slider { width: 100px; height: 4px; margin: 0 3px 0 4px; background: #9c9c9c; border-radius: 2px; display: flex; align-items: center; justify-content: center; }
.slider i { width: 16px; height: 16px; border-radius: 50%; background: #fff; box-shadow: 0 0 2px #888; flex: none; }
.zval { margin-left: 13px; color: #444; font-size: 12px; }
```
